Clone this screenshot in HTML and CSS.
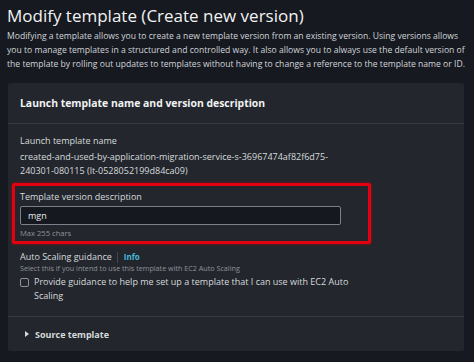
FILE: index.html
```html
<!DOCTYPE html>
<html>
<head>
<title>Modify template</title>
<link rel="stylesheet" href="styles.css">
</head>
<body>
<div class="page">
  <h1 class="title">Modify template (Create new version)</h1>
  <p class="intro">Modifying a template allows you to create a new template version from an existing version. Using versions allows you to manage templates in a structured and controlled way. It also allows you to always use the default version of the template by rolling out updates to templates without having to change a reference to the template name or ID.</p>

  <div class="panel">
    <div class="panel-header">
      <h2>Launch template name and version description</h2>
    </div>

    <div class="panel-body">
      <div class="field">
        <div class="label">Launch template name</div>
        <div class="value">created-and-used-by-application-migration-service-s-36967474af82f6d75-<br>240301-080115 (lt-0528052199d84ca09)</div>
      </div>

      <div class="highlight-box">
        <div class="label">Template version description</div>
        <input class="text-input" type="text" value="mgn">
        <div class="hint">Max 255 chars</div>
      </div>

      <div class="field guidance">
        <div class="label">Auto Scaling guidance <span class="sep"></span><a class="info">Info</a></div>
        <div class="hint small">Select this if you intend to use this template with EC2 Auto Scaling</div>
        <label class="check">
          <span class="box"></span>
          <span class="check-text">Provide guidance to help me set up a template that I can use with EC2 Auto Scaling</span>
        </label>
      </div>
    </div>

    <div class="panel-footer">
      <span class="caret"></span>
      <span class="footer-title">Source template</span>
    </div>
  </div>
</div>
</body>
</html>
```

FILE: styles.css
```css
body {
  background-color: #16191f;
  font-family: "Open Sans", sans-serif;
  color: #d5dbdb;
  margin: 0;
  padding: 0;
}

.page {
  width: 474px;
  height: 362px;
  overflow: hidden;
}

.title {
  color: #f2f3f3;
  font-size: 17px;
  font-weight: normal;
  line-height: 24px;
  margin: 0;
  padding: 4px 7px 0;
}

.intro {
  font-size: 8.6px;
  line-height: 14px;
  margin: 1px 6px 0 7px;
  color: #d1d5db;
}

.panel {
  background-color: #23262d;
  margin: 12px 10px 0 8px;
  border-radius: 2px;
}

.panel-header {
  height: 40px;
  display: flex;
  align-items: center;
  padding: 0 12px;
  border-bottom: 1px solid #363a42;
}

.panel-header h2 {
  color: #f2f3f3;
  font-size: 10.4px;
  font-weight: bold;
  margin: 0;
}

.panel-body {
  padding: 10px 12px 13px;
  border-bottom: 1px solid #363a42;
}

.label {
  font-size: 9px;
  line-height: 14px;
  color: #d5dbdb;
  display: flex;
  align-items: center;
}

.value {
  font-size: 9px;
  line-height: 14px;
  margin-top: 2px;
  color: #d5dbdb;
}

.highlight-box {
  margin: 5px 0 0 -8px;
  width: 343px;
  padding: 4px 5px 2px;
  border: 3px solid #e3000f;
  border-radius: 2px;
  box-shadow: 0 0 3px rgba(230, 0, 15, 0.6);
}

.text-input {
  display: block;
  box-sizing: border-box;
  width: 321px;
  height: 19px;
  margin-top: 2px;
  padding: 0 7px;
  background-color: #15181e;
  border: 1px solid #7a818a;
  border-radius: 2px;
  color: #e9ebed;
  font-family: "Open Sans", sans-serif;
  font-size: 9px;
}

.hint {
  font-size: 7.6px;
  line-height: 12px;
  color: #8d9399;
  margin-top: 2px;
}

.hint.small {
  font-size: 7.2px;
  line-height: 10px;
  margin-top: 0;
}

.guidance {
  margin-top: 7px;
}

.guidance .label {
  line-height: 12px;
}

.sep {
  display: inline-block;
  width: 1px;
  height: 11px;
  background-color: #414750;
  margin: 0 6px 0 5px;
}

.info {
  color: #44b9d6;
  font-size: 8px;
  font-weight: bold;
}

.check {
  display: flex;
  align-items: flex-start;
  margin-top: 2px;
}

.box {
  flex: none;
  box-sizing: border-box;
  width: 9px;
  height: 9px;
  border: 1px solid #8d9399;
  border-radius: 2px;
  margin: 3px 5px 0 0;
}

.check-text {
  font-size: 9px;
  line-height: 14px;
  width: 320px;
}

.panel-footer {
  height: 34px;
  display: flex;
  align-items: center;
  padding: 0 12px 0 17px;
}

.caret {
  width: 0;
  height: 0;
  border-top: 3px solid transparent;
  border-bottom: 3px solid transparent;
  border-left: 4px solid #d5dbdb;
  margin-right: 6px;
}

.footer-title {
  font-size: 9px;
  font-weight: bold;
  color: #d5dbdb;
}
```
